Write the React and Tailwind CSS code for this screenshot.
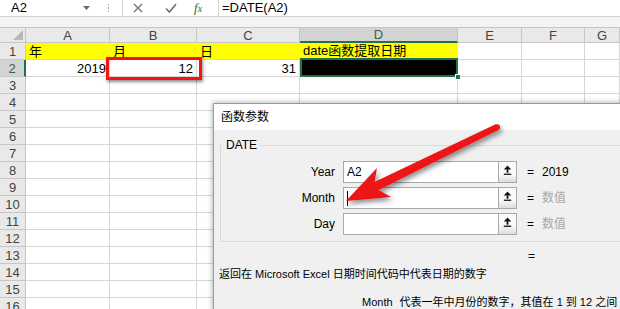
import React from "react";

const FONT = "font-['Liberation_Sans','Noto_Sans_CJK_SC',sans-serif]";

function RefIcon() {
  return (
    <svg width="9" height="11" viewBox="0 0 9 11">
      <polygon points="4.5,0.5 0.8,4.5 8.2,4.5" fill="#111" />
      <rect x="3.6" y="4.3" width="1.8" height="3.4" fill="#111" />
      <rect x="0.8" y="8.6" width="7.4" height="1.3" fill="#111" />
    </svg>
  );
}

function ArgRow({ label, value, valueGray, children }) {
  return (
    <div className="flex h-[22px] items-center">
      <div className="w-[114px] text-right text-[12px] text-black">{label}</div>
      <div className="ml-[8px] flex h-[22px] w-[174px] border border-[#a9a9a9] bg-white">
        <div className="flex flex-1 items-center pl-[3px] text-[12px] text-black">{children}</div>
        <div className="flex w-[18px] items-start justify-center border-l border-[#a9a9a9] bg-gradient-to-b from-[#fafafa] from-60% to-[#dcdcdc] pt-[3px]">
          <RefIcon />
        </div>
      </div>
      <div className="ml-[10px] text-[12px] text-black">=</div>
      <div className={valueGray ? "ml-[8px] text-[12px] text-[#a8a8a8]" : "ml-[8px] text-[12px] text-black"}>{value}</div>
    </div>
  );
}

export default function App() {
  const cols = ["A", "B", "C", "D", "E", "F", "G"];
  const rows = Array.from({ length: 16 }, (_, i) => i + 1);

  const cell = (r, c) => {
    if (r === 1 && ["A", "B", "C"].includes(c)) {
      return (
        <div key={c} className="h-[17px] border-b border-[#d6d6d6] bg-[#ffff00] pl-[3px] text-[13px] leading-[17px] text-black">
          {c === "A" ? "年" : c === "B" ? "月" : "日"}
        </div>
      );
    }
    if (r === 1 && c === "D") {
      return (
        <div key={c} className="h-[17px] border-b-[2px] border-b-[#217346] bg-[#ffff00] pl-[3px] text-[13px] leading-[16px] text-black">
          date函数提取日期
        </div>
      );
    }
    if (r === 2 && (c === "A" || c === "B" || c === "C")) {
      return (
        <div key={c} className="h-[17px] border-r border-b border-[#d6d6d6] pr-[3px] text-right text-[13px] leading-[17px] text-black">
          {c === "A" ? "2019" : c === "B" ? "12" : "31"}
        </div>
      );
    }
    if (r === 2 && c === "D") {
      return (
        <div key={c} className="relative h-[17px] border-x-[2px] border-b-[2px] border-[#217346] bg-black">
          <div className="absolute right-[-5px] bottom-[-5px] h-[6px] w-[6px] border border-white bg-[#217346]" />
        </div>
      );
    }
    return <div key={c} className="h-[17px] border-r border-b border-[#d6d6d6] bg-white" />;
  };

  return (
    <div className={"relative h-[309px] w-[620px] overflow-hidden bg-white " + FONT}>
      {/* formula bar */}
      <div className="flex h-[17px] border-b border-[#d4d4d4] bg-white">
        <div className="relative flex w-[95px] items-center pl-[11px] text-[13px] text-black">
          A2
          <svg className="absolute left-[83px] top-[6px]" width="7" height="4" viewBox="0 0 7 4">
            <polygon points="0,0 7,0 3.5,4" fill="#6b6b6b" />
          </svg>
        </div>
        <div className="flex w-[27px] items-center justify-center">
          <div className="flex flex-col gap-[2px]">
            <div className="h-[1.5px] w-[1.5px] bg-[#9a9a9a]" />
            <div className="h-[1.5px] w-[1.5px] bg-[#9a9a9a]" />
            <div className="h-[1.5px] w-[1.5px] bg-[#9a9a9a]" />
          </div>
        </div>
        <div className="flex w-[97px] items-center border-x border-[#d4d4d4]">
          <svg className="ml-[10px]" width="10" height="10" viewBox="0 0 10 10">
            <path d="M1 1 L9 9 M9 1 L1 9" stroke="#6e6e6e" strokeWidth="1.3" />
          </svg>
          <svg className="ml-[22px]" width="12" height="10" viewBox="0 0 12 10">
            <path d="M1 5.5 L4.5 9 L11 1" stroke="#6e6e6e" strokeWidth="1.6" fill="none" />
          </svg>
          <span className="ml-[17px] font-['Liberation_Serif',serif] text-[13px] italic text-[#217346]">
            f<span className="text-[10px]">x</span>
          </span>
        </div>
        <div className="flex flex-1 items-center pl-[3px] text-[13px] text-black">=DATE(A2)</div>
      </div>
      <div className="h-[10px] bg-[#f3f3f3]" />

      {/* grid */}
      <div className="grid grid-cols-[26px_84px_87px_103px_158px_64px_63px_35px]">
        <div className="relative h-[16px] border-r border-b border-t border-[#c6c6c6] bg-[#e9e9e9]">
          <svg className="absolute right-[2px] bottom-[2px]" width="10" height="10" viewBox="0 0 10 10">
            <polygon points="10,0 10,10 0,10" fill="#b8b8b8" />
          </svg>
        </div>
        {cols.map((c) =>
          c === "D" ? (
            <div key={c} className="h-[16px] border-t border-r border-[#c6c6c6] border-b-[2px] border-b-[#217346] bg-[#d3d3d3] text-center text-[13px] leading-[14px] text-[#3b5f48]">
              {c}
            </div>
          ) : (
            <div key={c} className="h-[16px] border-r border-b border-t border-[#c6c6c6] bg-[#e9e9e9] text-center text-[13px] leading-[15px] text-[#444]">
              {c}
            </div>
          )
        )}
        {rows.map((r) => (
          <React.Fragment key={r}>
            {r === 2 ? (
              <div className="h-[17px] border-b border-[#c6c6c6] border-r-[2px] border-r-[#217346] bg-[#d3d3d3] text-center text-[13px] leading-[17px] text-[#3b5f48]">
                {r}
              </div>
            ) : (
              <div className="h-[17px] border-r border-b border-[#c6c6c6] bg-[#e9e9e9] text-center text-[13px] leading-[17px] text-[#444]">
                {r}
              </div>
            )}
            {cols.map((c) => cell(r, c))}
          </React.Fragment>
        ))}
      </div>

      {/* red highlight around B2 */}
      <div className="absolute left-[106px] top-[57px] h-[23px] w-[96px] border-[3px] border-[#ff1010] shadow-[1px_2px_3px_rgba(0,0,0,0.45)]" />

      {/* dialog */}
      <div className="absolute left-[213px] top-[103px] h-[260px] w-[460px] border border-[#9a9a9a] bg-[#f0f0f0] shadow-[0_0_6px_rgba(0,0,0,0.35)]">
        <div className="flex h-[26px] items-center bg-white pl-[7px] text-[12px] text-black">函数参数</div>
        <fieldset className="ml-[6px] mt-[7px] border border-[#d9d9d9] pb-[6px] pt-[8px]">
          <legend className="ml-[2px] px-[3px] text-[12px] leading-[16px] text-black">DATE</legend>
          <div className="flex flex-col gap-[4px]">
            <ArgRow label="Year" value="2019">A2</ArgRow>
            <ArgRow label="Month" value="数值" valueGray>
              <div className="h-[15px] w-[1px] bg-black" />
            </ArgRow>
            <ArgRow label="Day" value="数值" valueGray />
          </div>
        </fieldset>
        <div className="mt-[6px] h-[16px] pl-[314px] text-[12px] leading-[16px] text-black">=</div>
        <div className="mt-[2px] h-[16px] whitespace-nowrap pl-[5px] text-[11px] leading-[16px] text-black">
          返回在 Microsoft Excel 日期时间代码中代表日期的数字
        </div>
        <div className="mt-[12px] h-[16px] whitespace-nowrap pl-[148px] text-[11px] leading-[16px] text-black">
          <span>Month</span>
          <span className="ml-[7px]">代表一年中月份的数字，其值在 1 到 12 之间</span>
        </div>
      </div>

      {/* red arrow */}
      <svg className="pointer-events-none absolute left-0 top-0" width="620" height="309" viewBox="0 0 620 309">
        <defs>
          <filter id="sh" x="-20%" y="-20%" width="140%" height="140%">
            <feDropShadow dx="2" dy="3" stdDeviation="2.5" floodColor="#000" floodOpacity="0.45" />
          </filter>
        </defs>
        <g filter="url(#sh)">
          <polygon
            points="346,201 391,197 378.5,190 498.3,130 495.7,124.3 374.5,182 377,168"
            fill="#ec1212"
          />
          <circle cx="497" cy="127.2" r="3" fill="#ec1212" />
        </g>
      </svg>
    </div>
  );
}
